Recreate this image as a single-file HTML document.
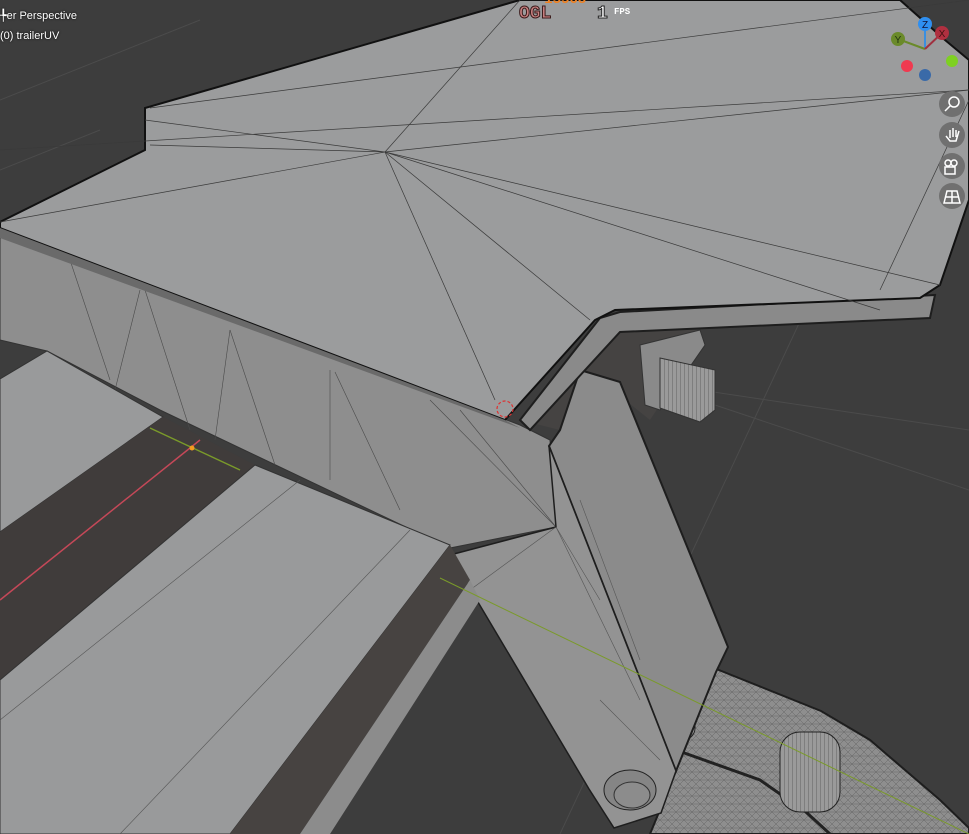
<!DOCTYPE html>
<html><head><meta charset="utf-8"><style>
html,body{margin:0;padding:0;width:969px;height:834px;overflow:hidden;background:#3d3d3d;font-family:"Liberation Sans",sans-serif}
svg{position:absolute;left:0;top:0}
.t{position:absolute;color:#fff;font-size:11px;text-shadow:0 0 2px #000}
</style></head><body>
<svg width="969" height="834" viewBox="0 0 969 834">
<defs>
<pattern id="mesh" width="8" height="8" patternUnits="userSpaceOnUse">
<rect width="8" height="8" fill="#8e8e8e"/><path d="M0 0 L8 8 M8 0 L0 8 M0 4 H8" stroke="#666" stroke-width="0.5"/>
</pattern>
<pattern id="cyl" width="4" height="10" patternUnits="userSpaceOnUse">
<rect width="4" height="10" fill="#9a9a9a"/><path d="M0 0 V10" stroke="#555" stroke-width="0.8"/>
</pattern>
</defs>
<rect width="969" height="834" fill="#3d3d3d"/>
<g stroke="#4b4b4b" stroke-width="1">
<line x1="0" y1="100" x2="200" y2="20"/><line x1="0" y1="170" x2="100" y2="130"/>
<line x1="700" y1="400" x2="969" y2="490"/><line x1="810" y1="300" x2="560" y2="834"/>
<line x1="700" y1="390" x2="969" y2="430"/>
</g>
<!-- dark underside -->
<polygon points="520,420 600,330 700,330 700,345 650,420 600,380 560,430" fill="#454342"/>
<polygon points="640,345 700,330 705,345 660,410 645,405" fill="#8a8a8a" stroke="#333"/>
<!-- pin -->
<polygon points="660,358 715,370 715,410 700,422 660,408" fill="url(#cyl)" stroke="#333"/>
<!-- front vertical panel -->
<polygon points="0,228 520,425 550,440 556,527 450,548 160,410 47,351 0,340" fill="#8e8e8e" stroke="#333"/>
<g stroke="#4a4a4a" stroke-width="0.6">
<line x1="70" y1="260" x2="110" y2="380"/><line x1="140" y1="290" x2="115" y2="390"/><line x1="145" y1="290" x2="190" y2="430"/>
<line x1="230" y1="330" x2="215" y2="440"/><line x1="230" y1="330" x2="275" y2="465"/><line x1="330" y1="370" x2="330" y2="480"/>
<line x1="335" y1="372" x2="400" y2="510"/><line x1="430" y1="400" x2="556" y2="527"/><line x1="460" y1="410" x2="556" y2="527"/>
</g>
<!-- chain link -->
<polygon points="654,644 821,711 870,740 940,800 969,828 969,834 650,834 676,771 690,700" fill="url(#mesh)" stroke="#1e1e1e" stroke-width="2"/>
<path d="M676,750 L760,780 L806,812 L830,834" stroke="#222" stroke-width="3" fill="none"/>
<rect x="780" y="732" width="60" height="80" rx="20" fill="url(#cyl)" stroke="#222"/>
<rect x="650" y="660" width="45" height="80" rx="12" fill="url(#cyl)" stroke="#222"/>
<!-- arm back face -->
<polygon points="580,370 620,382 728,647 716,672 676,771 549,446 560,430" fill="#8b8b8b" stroke="#1e1e1e" stroke-width="2"/>
<!-- arm front face -->
<polygon points="549,446 676,771 661,813 614,828 589,789 450,555 556,527" fill="#939393" stroke="#1e1e1e" stroke-width="1.5"/>
<g stroke="#555" stroke-width="0.6">
<line x1="556" y1="527" x2="600" y2="600"/><line x1="556" y1="527" x2="470" y2="590"/><line x1="556" y1="527" x2="640" y2="700"/>
<line x1="580" y1="500" x2="640" y2="660"/><line x1="600" y1="700" x2="660" y2="760"/>
</g>
<ellipse cx="630" cy="790" rx="26" ry="20" fill="#858585" stroke="#222"/>
<ellipse cx="632" cy="795" rx="18" ry="13" fill="#8c8c8c" stroke="#333"/>
<!-- boards -->
<polygon points="0,379 47,351 163,417 0,532" fill="#999a9b" stroke="#333"/>
<polygon points="0,532 163,417 255,465 0,680" fill="#403c3b"/>
<line x1="0" y1="600" x2="200" y2="440" stroke="#c44858" stroke-width="1.5"/>
<line x1="150" y1="428" x2="240" y2="470" stroke="#7a9a2a" stroke-width="1.5"/>
<circle cx="192" cy="448" r="2.5" fill="#f59a20"/>
<polygon points="0,680 255,465 450,545 230,834 0,834" fill="#999a9b" stroke="#333"/>
<line x1="0" y1="720" x2="300" y2="480" stroke="#555" stroke-width="0.6"/>
<line x1="120" y1="834" x2="410" y2="530" stroke="#555" stroke-width="0.6"/>
<polygon points="230,834 450,545 470,580 300,834" fill="#474341"/>
<polygon points="300,834 470,580 480,600 330,834" fill="#8c8c8c"/>
<line x1="440" y1="578" x2="969" y2="834" stroke="#7a9a2a" stroke-width="1"/>
<!-- plate right thickness -->
<polygon points="520,420 600,318 620,312 935,295 930,318 620,332 530,430" fill="#8a8a8a" stroke="#1e1e1e" stroke-width="2"/>
<!-- plate top -->
<polygon points="0,222 145,150 145,108 520,0 900,0 945,40 969,60 969,200 940,285 920,298 615,310 595,320 505,420 0,228" fill="#9b9c9d" stroke="#111" stroke-width="2"/>
<g stroke="#3a3a3a" stroke-width="0.7" fill="none">
<line x1="385" y1="152" x2="145" y2="120"/><line x1="385" y1="152" x2="0" y2="222"/>
<line x1="385" y1="152" x2="495" y2="400"/><line x1="385" y1="152" x2="590" y2="320"/>
<line x1="385" y1="152" x2="940" y2="285"/><line x1="385" y1="152" x2="969" y2="90"/>
<line x1="385" y1="152" x2="880" y2="310"/><line x1="0" y1="150" x2="969" y2="90"/>
<line x1="150" y1="108" x2="969" y2="0"/><line x1="880" y1="290" x2="969" y2="100"/>
<line x1="385" y1="152" x2="150" y2="145"/><line x1="385" y1="152" x2="520" y2="0"/>
</g>
<polygon points="0,228 505,420 520,428 0,238" fill="#6a6a6a"/>
<circle cx="505" cy="409" r="8" fill="none" stroke="#d33" stroke-width="1.2" stroke-dasharray="3 2"/>
<!-- gizmo -->
<line x1="925" y1="49" x2="925" y2="24" stroke="#3b8fe0" stroke-width="2"/>
<line x1="925" y1="49" x2="898" y2="39" stroke="#6a8a2a" stroke-width="2"/>
<line x1="925" y1="49" x2="942" y2="33" stroke="#a03040" stroke-width="2"/>
<circle cx="925" cy="24" r="7" fill="#2f8ff0"/><text x="925" y="28" font-size="10" text-anchor="middle" fill="#113">Z</text>
<circle cx="942" cy="33" r="7" fill="#b03040"/><text x="942" y="37" font-size="10" text-anchor="middle" fill="#411">X</text>
<circle cx="898" cy="39" r="7" fill="#6a8a2a"/><text x="898" y="43" font-size="10" text-anchor="middle" fill="#231">Y</text>
<circle cx="907" cy="66" r="6" fill="#f03a50"/><circle cx="925" cy="75" r="6" fill="#3a6aa8"/><circle cx="952" cy="61" r="6" fill="#7ed022"/>
<g fill="#707070"><circle cx="952" cy="104" r="13"/><circle cx="952" cy="135" r="13"/><circle cx="952" cy="166" r="13"/><circle cx="952" cy="196" r="13"/></g>
<g stroke="#fff" stroke-width="1.5" fill="none">
<circle cx="954" cy="102" r="5"/><line x1="950" y1="106" x2="945" y2="111"/>
<path d="M946 136 l4 5 h6 l3 -10 M950 138 v-8 M953 137 v-9 M956 137 v-7"/>
<rect x="945" y="167" width="10" height="7"/><circle cx="948" cy="163" r="3"/><circle cx="954" cy="163" r="3"/>
<path d="M944 203 l3 -12 h10 l3 12 z M946 197 h12 M952 191 v12"/>
</g>
</svg>
<div class="t" style="left:0;top:9px">╄er Perspective</div>
<div class="t" style="left:0;top:30px">(0) trailerUV</div>
<div style="position:absolute;left:519px;top:4px;font:bold 18px 'Liberation Mono',monospace;color:#c88080;-webkit-text-stroke:1px #3a1a1a">OGL</div>
<div style="position:absolute;left:597px;top:4px;font:bold 18px 'Liberation Mono',monospace;color:#fff;-webkit-text-stroke:1px #222">1</div>
<div style="position:absolute;left:614px;top:7px;font:bold 9px 'Liberation Mono',monospace;color:#fff">FPS</div>
<div style="position:absolute;left:519px;top:-8px;font:bold 14px 'Liberation Mono',monospace;color:#f08020">&nbsp;&nbsp;&nbsp;13568</div>
</body></html>
